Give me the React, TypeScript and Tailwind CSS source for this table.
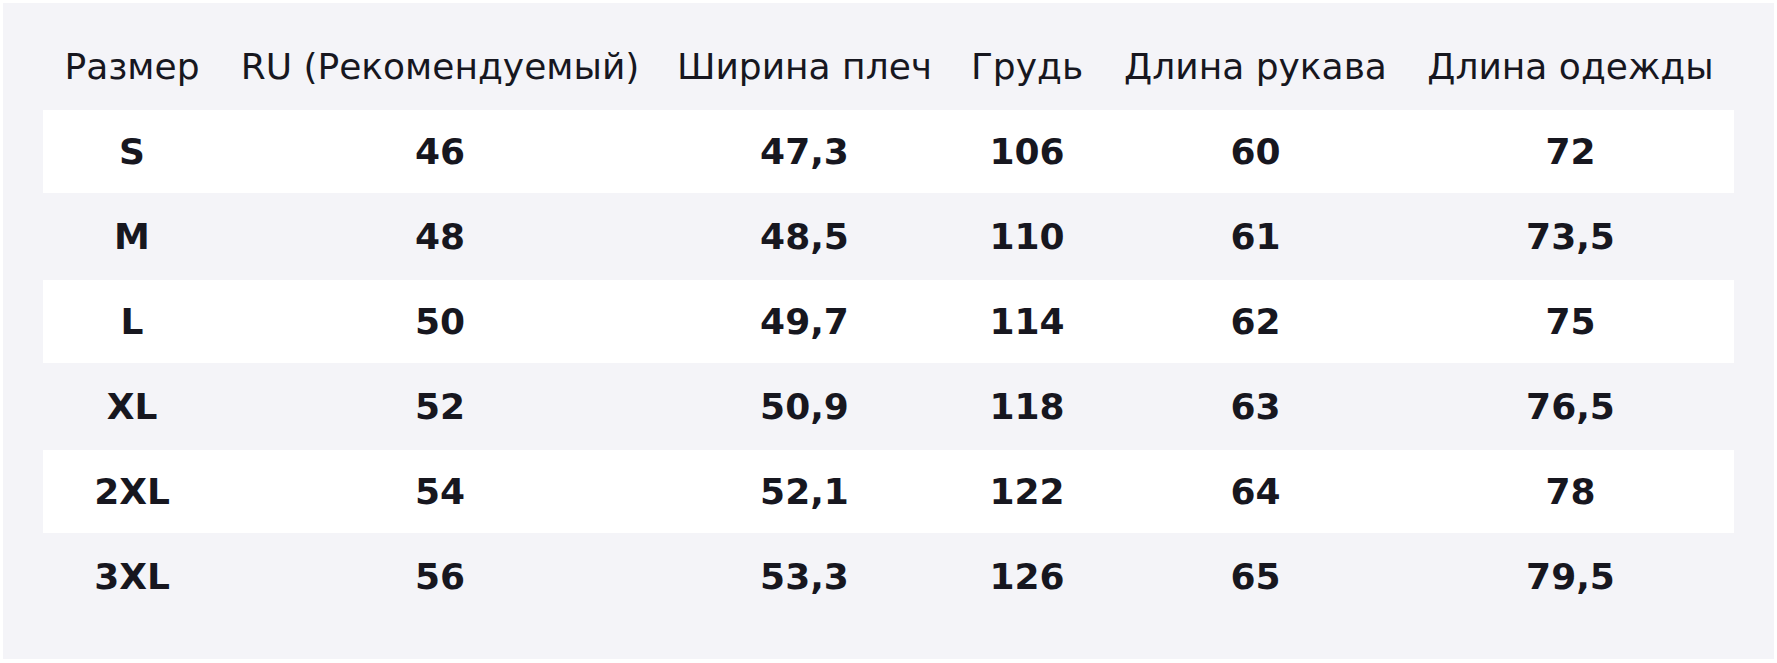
const headers = [
  "Размер",
  "RU (Рекомендуемый)",
  "Ширина плеч",
  "Грудь",
  "Длина рукава",
  "Длина одежды",
];

const rows = [
  ["S", "46", "47,3", "106", "60", "72"],
  ["M", "48", "48,5", "110", "61", "73,5"],
  ["L", "50", "49,7", "114", "62", "75"],
  ["XL", "52", "50,9", "118", "63", "76,5"],
  ["2XL", "54", "52,1", "122", "64", "78"],
  ["3XL", "56", "53,3", "126", "65", "79,5"],
];

const cols = "grid grid-cols-[178px_438px_291px_154px_303px_327px]";

export default function App() {
  return (
    <div className="min-h-screen bg-white p-[3px] font-['DejaVu_Sans',sans-serif] text-[#17171f]">
      <div className="flex flex-col gap-[2px] bg-[#f4f4f8] px-[40px] pt-[22px] pb-[41px]">
        <div className={`${cols} h-[83px] items-center text-[36px]`}>
          {headers.map((h) => (
            <div key={h} className="text-center whitespace-nowrap">
              {h}
            </div>
          ))}
        </div>
        {rows.map((r, i) => (
          <div
            key={r[0]}
            className={`${cols} h-[83px] items-center text-[36px] font-bold ${
              i % 2 === 0 ? "bg-white" : ""
            }`}
          >
            {r.map((v, j) => (
              <div key={j} className="text-center">
                {v}
              </div>
            ))}
          </div>
        ))}
      </div>
    </div>
  );
}
